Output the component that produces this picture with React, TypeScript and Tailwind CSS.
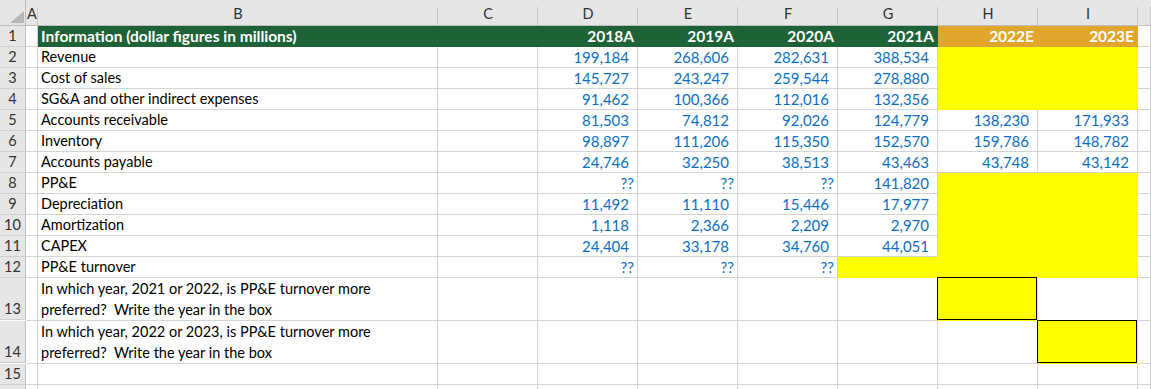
import React from 'react';

type Fill = 'green' | 'orange' | 'yellow' | null;

interface Cell {
  text?: string;
  fill?: Fill;
  bold?: boolean;
  num?: boolean;
  boxed?: boolean;
}

const COLS = ['A', 'B', 'C', 'D', 'E', 'F', 'G', 'H', 'I', ''];

const fillClass: Record<string, string> = {
  green: 'bg-[#1e6338] border-[#1e6338] text-white',
  orange: 'bg-[#e1a52c] border-[#e1a52c] text-white',
  yellow: 'bg-[#ffff00] border-[#ffff00]',
};

const Y: Cell = { fill: 'yellow' };

function dataRow(label: string, vals: string[], h: Cell[] = [], g?: Cell): Cell[] {
  const nums = vals.map((v): Cell => ({ text: v, num: v !== '??' }));
  while (nums.length < 4) nums.push({});
  if (g) nums[3] = g;
  return [{}, { text: label }, {}, ...nums, h[0] ?? {}, h[1] ?? {}, {}];
}

const ROWS: { n: number; label?: string; tall?: boolean; cells: Cell[] }[] = [
  {
    n: 1,
    cells: [
      {},
      { text: 'Information (dollar figures in millions)', fill: 'green', bold: true },
      { fill: 'green' },
      { text: '2018A', fill: 'green', bold: true },
      { text: '2019A', fill: 'green', bold: true },
      { text: '2020A', fill: 'green', bold: true },
      { text: '2021A', fill: 'green', bold: true },
      { text: '2022E', fill: 'orange', bold: true },
      { text: '2023E', fill: 'orange', bold: true },
      {},
    ],
  },
  { n: 2, cells: dataRow('Revenue', ['199,184', '268,606', '282,631', '388,534'], [Y, Y]) },
  { n: 3, cells: dataRow('Cost of sales', ['145,727', '243,247', '259,544', '278,880'], [Y, Y]) },
  { n: 4, cells: dataRow('SG&A and other indirect expenses', ['91,462', '100,366', '112,016', '132,356'], [Y, Y]) },
  {
    n: 5,
    cells: dataRow('Accounts receivable', ['81,503', '74,812', '92,026', '124,779'], [
      { text: '138,230', num: true },
      { text: '171,933', num: true },
    ]),
  },
  {
    n: 6,
    cells: dataRow('Inventory', ['98,897', '111,206', '115,350', '152,570'], [
      { text: '159,786', num: true },
      { text: '148,782', num: true },
    ]),
  },
  {
    n: 7,
    cells: dataRow('Accounts payable', ['24,746', '32,250', '38,513', '43,463'], [
      { text: '43,748', num: true },
      { text: '43,142', num: true },
    ]),
  },
  { n: 8, cells: dataRow('PP&E', ['??', '??', '??', '141,820'], [Y, Y]) },
  { n: 9, cells: dataRow('Depreciation', ['11,492', '11,110', '15,446', '17,977'], [Y, Y]) },
  { n: 10, cells: dataRow('Amortization', ['1,118', '2,366', '2,209', '2,970'], [Y, Y]) },
  { n: 11, cells: dataRow('CAPEX', ['24,404', '33,178', '34,760', '44,051'], [Y, Y]) },
  { n: 12, cells: dataRow('PP&E turnover', ['??', '??', '??'], [Y, Y], Y) },
  {
    n: 13,
    tall: true,
    cells: [{}, { text: 'q2021' }, {}, {}, {}, {}, {}, { fill: 'yellow', boxed: true }, {}, {}],
  },
  {
    n: 14,
    tall: true,
    cells: [{}, { text: 'q2022' }, {}, {}, {}, {}, {}, {}, { fill: 'yellow', boxed: true }, {}],
  },
  { n: 15, cells: Array.from({ length: 10 }, () => ({})) },
  // row 16 is only a sliver at the bottom edge, its number is not visible
  { n: 16, label: '', cells: Array.from({ length: 10 }, () => ({})) },
];

const QUESTIONS: Record<string, [string, string]> = {
  q2021: ['In which year, 2021 or 2022, is PP&E turnover more', 'preferred?  Write the year in the box'],
  q2022: ['In which year, 2022 or 2023, is PP&E turnover more', 'preferred?  Write the year in the box'],
};

function SheetCell({ cell, col }: { cell: Cell; col: number }) {
  const fill = cell.fill ? fillClass[cell.fill] : 'border-[#d4d4d4]';
  const align = col >= 3 ? 'justify-end' : 'justify-start';
  const pad = col >= 3 ? (cell.num ? 'pr-[8px]' : 'pr-[3px]') : 'pl-[3px]';
  const color = cell.fill === 'green' || cell.fill === 'orange' ? '' : cell.num || cell.text === '??' ? 'text-[#0b6fc4]' : 'text-black';
  const size = cell.bold ? 'font-bold text-[15.5px]' : cell.num || cell.text === '??' ? 'text-[15px]' : '';
  const q = cell.text ? QUESTIONS[cell.text] : undefined;

  return (
    <div className={`relative flex items-end overflow-visible whitespace-pre border-r border-b ${fill} ${align} ${pad} ${color} ${size}`}>
      {q ? (
        <div className="leading-[21px]">
          <div>{q[0]}</div>
          <div>{q[1]}</div>
        </div>
      ) : (
        cell.text && <span className="leading-[20px]">{cell.text}</span>
      )}
      {cell.boxed && <div className="absolute -left-px -top-px right-0 bottom-0 border border-black" />}
    </div>
  );
}

export default function App() {
  return (
    <div className="w-[1151px] h-[389px] overflow-hidden bg-white font-[Lato,sans-serif] text-[14.5px] text-black">
      <div className="grid grid-cols-[26px_12px_400px_repeat(7,100px)_1fr]">
        {/* select-all corner */}
        <div className="relative h-[26px] bg-[#e6e6e6] border-r border-b border-[#bdbdbd]">
          <svg className="absolute left-[10px] top-[11px]" width="14" height="12" viewBox="0 0 14 12">
            <polygon points="14,0 14,12 0,12" fill="#b7b7b7" />
          </svg>
        </div>
        {COLS.map((c, i) => (
          <div
            key={i}
            className="relative flex h-[26px] items-end justify-center bg-[#e6e6e6] border-b border-[#bdbdbd] pb-[2px] leading-[18px] text-[#333]"
          >
            {c}
            <div className="absolute right-0 top-[7px] bottom-0 w-px bg-[#c8c8c8]" />
          </div>
        ))}

        {ROWS.map((row) => (
          <React.Fragment key={row.n}>
            <div
              className={`flex items-end justify-center bg-[#e6e6e6] border-r border-b border-r-[#bdbdbd] border-b-[#d0d0d0] text-[#333] leading-[20px] ${
                row.tall ? 'h-[42px]' : 'h-[21px]'
              }`}
            >
              {row.label ?? row.n}
            </div>
            {row.cells.map((cell, i) => (
              <SheetCell key={i} cell={cell} col={i} />
            ))}
          </React.Fragment>
        ))}
      </div>
    </div>
  );
}
